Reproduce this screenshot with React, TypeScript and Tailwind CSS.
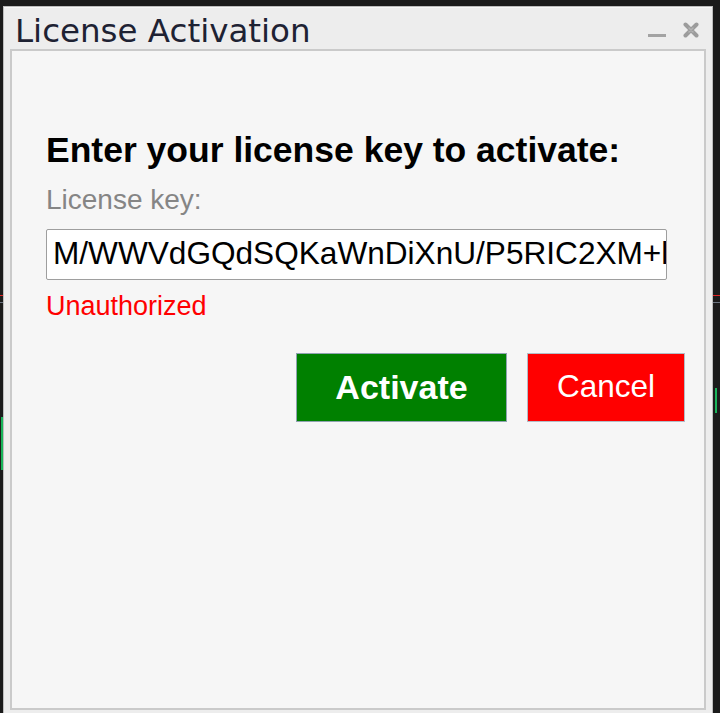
import React from 'react';

const KEY_TEXT = 'M/WWVdGQdSQKaWnDiXnU/P5RIC2XM+l';

function CloseGlyph() {
  return (
    <svg width="16" height="16" viewBox="0 0 16 16" className="block">
      <path d="M2.5 2.5 L13.5 13.5 M13.5 2.5 L2.5 13.5" stroke="#9c9c9c" strokeWidth="4" strokeLinecap="round" />
      <path d="M6 6 L10 10 M10 6 L6 10" stroke="#b4b4b4" strokeWidth="1.5" strokeLinecap="round" />
    </svg>
  );
}

export default function App() {
  return (
    <div className="relative w-[720px] h-[713px] overflow-hidden bg-[#1b1b1b]">
      {/* chart bits peeking out behind the dialog */}
      <div className="absolute left-0 top-[295px] w-[3px] h-px bg-[#e02424]" />
      <div className="absolute left-0 top-[302px] w-[3px] h-px bg-[#6c7480]" />
      <div className="absolute left-[1px] top-[417px] w-[2px] h-[53px] bg-[#19b45a]" />
      <div className="absolute right-0 top-[295px] w-[7px] h-px bg-[#e02424]" />
      <div className="absolute right-0 top-[302px] w-[7px] h-px bg-[#6c7480]" />
      <div className="absolute left-[715px] top-[388px] w-[2px] h-[25px] bg-[#19b45a]" />

      {/* window */}
      <div className="ml-[3px] mt-[6px] w-[710px] h-[710px] border border-[#bdbdbd] bg-[#ededed] flex flex-col">
        {/* title bar */}
        <div className="h-[42px] flex items-start justify-between pl-[11px] pr-[13px] border-t border-[#f7f7f7]">
          <div className="mt-[7px] text-[32.5px] leading-none text-[#1e2233] font-['DejaVu_Sans',sans-serif]">
            License Activation
          </div>
          <div className="flex items-start gap-[17px] mt-[14px]">
            <div className="mt-[12px] w-[18px] h-[3px] bg-[#a3a3a3]" />
            <CloseGlyph />
          </div>
        </div>

        {/* content panel */}
        <div className="mx-[6px] h-[661px] border-[2px] border-[#cacaca] bg-[#f6f6f6] pl-[34px] pr-[19px] pt-[82px] font-['Liberation_Sans',Arial,sans-serif]">
          <div className="text-[35.5px] leading-none font-bold text-black">Enter your license key to activate:</div>
          <div className="mt-[17px] text-[28px] leading-none text-[#858585]">License key:</div>
          <div className="mt-[15px] w-[621px] h-[51px] border border-[#9e9e9e] rounded-[2px] bg-white pl-[6px] flex items-center overflow-hidden">
            <span className="text-[31.6px] leading-none text-black whitespace-nowrap">{KEY_TEXT}</span>
          </div>
          <div className="mt-[13px] text-[27px] leading-none text-[#ff0000]">Unauthorized</div>
          <div className="mt-[33px] flex justify-end gap-[20px]">
            <button className="w-[211px] h-[69px] bg-[#008000] border border-[#8fa3b0] text-white text-[34px] font-bold leading-none">
              Activate
            </button>
            <button className="w-[158px] h-[69px] bg-[#ff0000] border border-[#b3bcc6] text-white text-[31.5px] leading-none">
              Cancel
            </button>
          </div>
        </div>
      </div>
    </div>
  );
}
